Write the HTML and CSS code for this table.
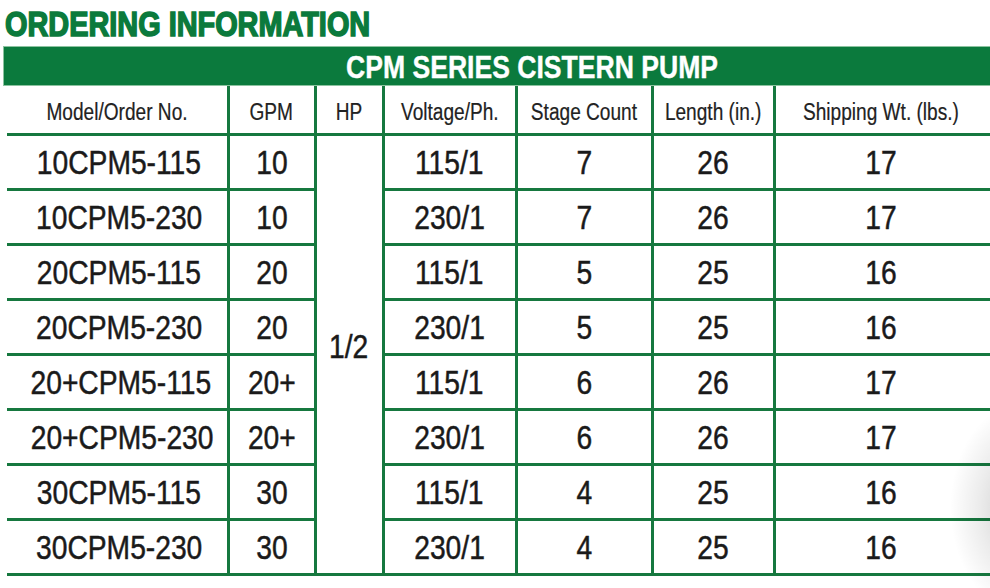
FILE: index.html
```html
<!DOCTYPE html>
<html>
<head>
<meta charset="utf-8">
<link rel="stylesheet" href="styles.css">
</head>
<body>
<div class="page">
  <h1 class="title"><span class="t">ORDERING INFORMATION</span></h1>
  <div class="bar"><span class="t">CPM SERIES CISTERN PUMP</span></div>
  <table class="spec">
    <colgroup>
      <col class="c1"><col class="c2"><col class="c3"><col class="c4"><col class="c5"><col class="c6"><col class="c7">
    </colgroup>
    <thead>
      <tr>
        <th><span class="t">Model/Order No.</span></th>
        <th><span class="t">GPM</span></th>
        <th><span class="t">HP</span></th>
        <th><span class="t">Voltage/Ph.</span></th>
        <th><span class="t">Stage Count</span></th>
        <th><span class="t">Length (in.)</span></th>
        <th><span class="t">Shipping Wt. (lbs.)</span></th>
      </tr>
    </thead>
    <tbody>
      <tr><td><span class="t">10CPM5-115</span></td><td><span class="t">10</span></td><td class="hp" rowspan="8"><span class="t">1/2</span></td><td><span class="t">115/1</span></td><td><span class="t">7</span></td><td><span class="t">26</span></td><td><span class="t">17</span></td></tr>
      <tr><td><span class="t">10CPM5-230</span></td><td><span class="t">10</span></td><td><span class="t">230/1</span></td><td><span class="t">7</span></td><td><span class="t">26</span></td><td><span class="t">17</span></td></tr>
      <tr><td><span class="t">20CPM5-115</span></td><td><span class="t">20</span></td><td><span class="t">115/1</span></td><td><span class="t">5</span></td><td><span class="t">25</span></td><td><span class="t">16</span></td></tr>
      <tr><td><span class="t">20CPM5-230</span></td><td><span class="t">20</span></td><td><span class="t">230/1</span></td><td><span class="t">5</span></td><td><span class="t">25</span></td><td><span class="t">16</span></td></tr>
      <tr><td><span class="t">20+CPM5-115</span></td><td><span class="t">20+</span></td><td><span class="t">115/1</span></td><td><span class="t">6</span></td><td><span class="t">26</span></td><td><span class="t">17</span></td></tr>
      <tr><td><span class="t">20+CPM5-230</span></td><td><span class="t">20+</span></td><td><span class="t">230/1</span></td><td><span class="t">6</span></td><td><span class="t">26</span></td><td><span class="t">17</span></td></tr>
      <tr><td><span class="t">30CPM5-115</span></td><td><span class="t">30</span></td><td><span class="t">115/1</span></td><td><span class="t">4</span></td><td><span class="t">25</span></td><td><span class="t">16</span></td></tr>
      <tr><td><span class="t">30CPM5-230</span></td><td><span class="t">30</span></td><td><span class="t">230/1</span></td><td><span class="t">4</span></td><td><span class="t">25</span></td><td><span class="t">16</span></td></tr>
    </tbody>
  </table>
  <div class="curl"></div>
</div>
</body>
</html>
```
FILE: styles.css
```css
html, body {
  margin: 0;
  padding: 0;
  background: #ffffff;
}
body {
  width: 990px;
  height: 588px;
  overflow: hidden;
  font-family: "Liberation Sans", Arial, sans-serif;
  color: #1b1b1b;
}
.page {
  position: relative;
  width: 990px;
  height: 588px;
  overflow: hidden;
}
.t {
  display: inline-block;
  white-space: nowrap;
  transform: scaleX(0.83);
  transform-origin: 50% 50%;
}
.title {
  margin: 0;
  padding: 6px 0 0 5px;
  height: 44px;
  box-sizing: border-box;
  font-size: 35px;
  line-height: 36px;
  font-weight: 700;
  color: #0b7a3c;
  -webkit-text-stroke: 1.6px #0b7a3c;
}
.title .t {
  transform: scaleX(0.825);
  transform-origin: 0 50%;
}
.bar {
  margin: 3px 0 0 4px;
  height: 38px;
  width: 986px;
  background: #0b7a3d;
  color: #ffffff;
  font-weight: 700;
  font-size: 32px;
  line-height: 40px;
  text-align: center;
  padding-left: 70px;
  box-sizing: border-box;
  box-shadow: 0 0 0 1px #8cc3a0;
  -webkit-text-stroke: 0.4px #ffffff;
}
.spec {
  margin-left: 7px;
  margin-top: 1px;
  border-collapse: collapse;
  table-layout: fixed;
  width: 1000px;
}
.c1 { width: 221px; }
.c2 { width: 87px; }
.c3 { width: 68px; }
.c4 { width: 133px; }
.c5 { width: 136px; }
.c6 { width: 122px; }
.c7 { width: 233px; }
.spec th, .spec td {
  padding: 0;
  text-align: center;
  white-space: nowrap;
  border: 3px solid #16783f;
  border-top: none;
}
.spec tr > :first-child {
  border-left: none;
}
.spec tr > :last-child {
  border-right: none;
  padding-right: 20px;
}
.spec th {
  height: 41px;
  padding-top: 6px;
  font-size: 23px;
  font-weight: 400;
  color: #222222;
  -webkit-text-stroke: 0.2px #222222;
}
.spec td {
  height: 52px;
  font-size: 34px;
  font-weight: 400;
  color: #1a1a1a;
  -webkit-text-stroke: 0.5px #1a1a1a;
}
.spec td:first-child {
  padding-left: 5px;
}
.spec td.hp {
  padding-right: 0;
  padding-bottom: 16px;
}
.curl {
  position: absolute;
  right: -80px;
  top: 380px;
  width: 150px;
  height: 220px;
  background: radial-gradient(ellipse 50% 48% at 70% 58%, rgba(0,0,0,0.22), rgba(0,0,0,0.08) 60%, rgba(0,0,0,0) 100%);
  pointer-events: none;
}
```
